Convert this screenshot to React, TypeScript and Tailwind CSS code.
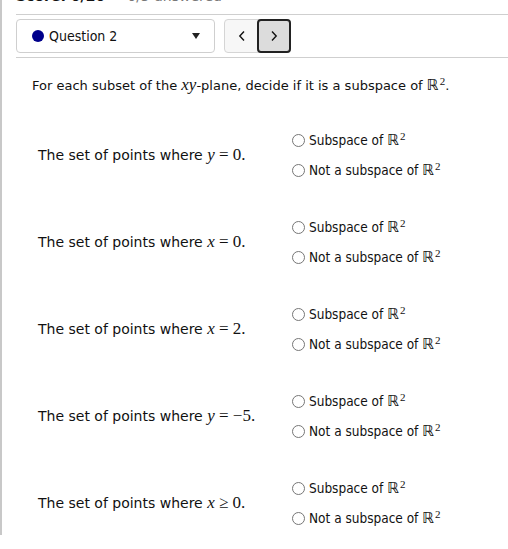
import React from "react";

const cond = { fontFamily: '"DejaVu Sans Condensed", "DejaVu Sans", Verdana, sans-serif' };
const sans = { fontFamily: '"DejaVu Sans", Verdana, sans-serif' };
const serif = { fontFamily: '"Liberation Serif", "DejaVu Serif", serif' };

function R2() {
  return (
    <span className="whitespace-nowrap">
      <span className="text-[15px]" style={{ fontFamily: '"DejaVu Sans", serif' }}>
        ℝ
      </span>
      <sup className="ml-[1px] text-[11px]" style={serif}>
        2
      </sup>
    </span>
  );
}

function MathVar({ v }: { v: string }) {
  return (
    <span className="text-[17px] italic" style={serif}>
      {v}
    </span>
  );
}

const rows: { v: string; op: string; n: string }[] = [
  { v: "y", op: "=", n: "0" },
  { v: "x", op: "=", n: "0" },
  { v: "x", op: "=", n: "2" },
  { v: "y", op: "=", n: "−5" },
  { v: "x", op: "≥", n: "0" },
];

function Radio({ label }: { label: React.ReactNode }) {
  return (
    <label className="flex h-[20px] items-center gap-[4px] leading-[20px]">
      <span className="h-[13px] w-[13px] rounded-full border border-[#767676] bg-white" />
      <span>{label}</span>
    </label>
  );
}

export default function App() {
  return (
    <div className="h-[549px] w-[508px] overflow-hidden bg-white text-[13px] text-[#111]" style={cond}>
      <div className="h-full border-l-2 border-[#c8c8c8]">
        <div className="-mt-[14px] flex h-[20px] gap-[22px] pl-[14px] text-[14px] leading-[20px]" style={sans}>
          <span className="font-bold">Score: 0/20</span>
          <span className="text-[#777]">0/5 answered</span>
        </div>
        <div className="ml-[14px] mt-[8px] border-t border-[#cfcfcf]" />
        <div className="ml-[14px] flex items-center gap-[9px] py-[4px]">
          <div className="flex h-[34px] w-[199px] items-center rounded-[4px] border border-[#cfcfcf] px-[15px]">
            <span className="h-[12px] w-[12px] rounded-full bg-[#00008b]" />
            <span className="ml-[5px] text-[14px]">Question 2</span>
            <span className="ml-auto mr-[-1px] h-0 w-0 border-x-[4px] border-t-[6px] border-x-transparent border-t-[#222]" />
          </div>
          <div className="flex h-[34px] w-[67px] rounded-[4px] border border-[#d5d5d5] bg-[#f7f7f7]">
            <button className="flex w-[34px] items-center justify-center">
              <svg width="8" height="12" viewBox="0 0 8 12">
                <path d="M6 1.5 L1.8 6 L6 10.5" fill="none" stroke="#111" strokeWidth="1.4" />
              </svg>
            </button>
            <button className="-m-px flex w-[34px] items-center justify-center rounded-[4px] border-2 border-[#222] bg-[#dcdcdc]">
              <svg width="8" height="12" viewBox="0 0 8 12">
                <path d="M2 1.5 L6.2 6 L2 10.5" fill="none" stroke="#111" strokeWidth="1.4" />
              </svg>
            </button>
          </div>
        </div>
        <div className="ml-[14px] border-t border-[#cfcfcf]" />
        <p className="ml-[30px] mt-[17px] h-[20px] text-[13px] leading-[20px]" style={sans}>
          For each subset of the <MathVar v="xy" />-plane, decide if it is a subspace of <R2 />.
        </p>
        <div className="mt-[35px] flex flex-col gap-[37px]">
          {rows.map((r, i) => (
            <div key={i} className="flex h-[50px] items-center">
              <div className="ml-[36px] w-[254px] text-[14px] leading-[20px]" style={sans}>
                The set of points where <MathVar v={r.v} />
                <span className="text-[17px]" style={serif}>
                  {" "}
                  {r.op} {r.n}.
                </span>
              </div>
              <div className="flex flex-col gap-[10px] text-[13.5px]">
                <Radio label={<>Subspace of <R2 /></>} />
                <Radio label={<>Not a subspace of <R2 /></>} />
              </div>
            </div>
          ))}
        </div>
      </div>
    </div>
  );
}
